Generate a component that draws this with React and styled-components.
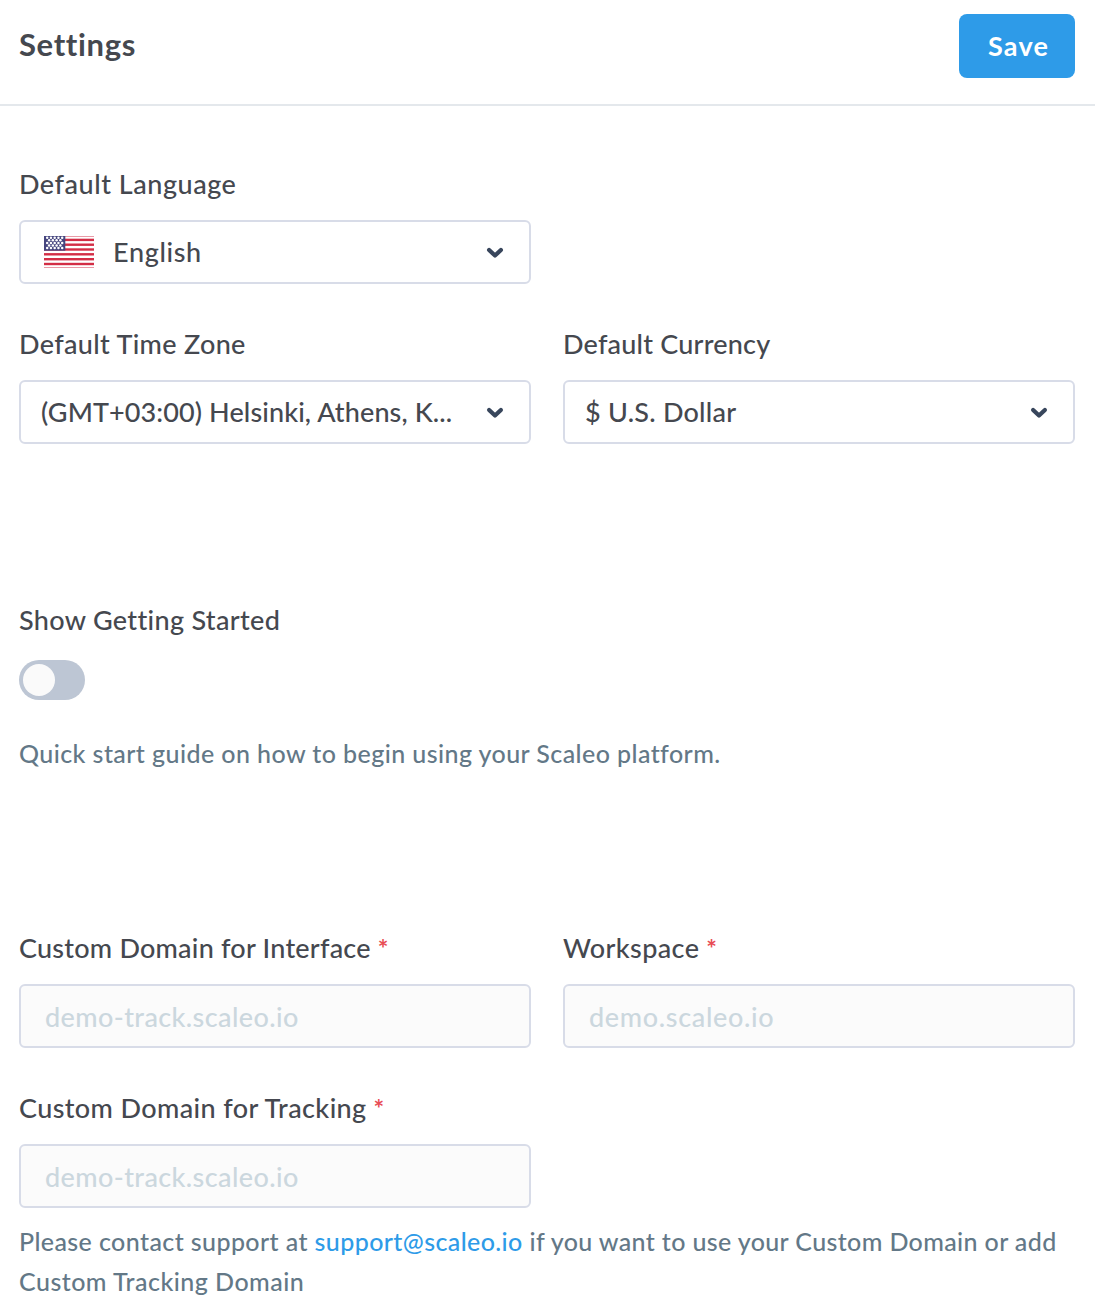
import React, { useState } from "react";
import styled, { createGlobalStyle } from "styled-components";

const GlobalStyle = createGlobalStyle`
  *, *::before, *::after { box-sizing: border-box; }
  body {
    margin: 0;
    background: #fff;
    color: #45484f;
    font-family: Lato, "Liberation Sans", sans-serif;
    font-weight: 500;
    font-variant-ligatures: none;
  }
`;

const Page = styled.main`
  width: 1095px;
  min-height: 1311px;
`;

const Header = styled.header`
  display: flex;
  align-items: flex-start;
  justify-content: space-between;
  height: 106px;
  padding: 14px 20px 0 19px;
  border-bottom: 2px solid #e4e8ec;
`;

const Title = styled.h1`
  margin: 0;
  font-size: 31px;
  line-height: 60px;
  font-weight: 700;
  letter-spacing: 0.65px;
`;

const SaveButton = styled.button`
  width: 116px;
  height: 64px;
  padding: 0 0 1px 3px;
  border: 0;
  border-radius: 8px;
  background: #2e9be8;
  color: #fff;
  font: 700 27px Lato, sans-serif;
  letter-spacing: 1.2px;
`;

const Section = styled.section`
  display: grid;
  grid-template-columns: 512px 512px;
  gap: 44px 32px;
  padding: ${(p) => p.$top}px 20px 0 19px;
`;

const Field = styled.div`
  grid-column: ${(p) => (p.$wide ? "1 / -1" : "auto")};
`;

const Label = styled.label`
  display: flex;
  height: 36px;
  margin-bottom: ${(p) => p.$gap || 16}px;
  font-size: 27px;
  line-height: 32px;
  white-space: nowrap;
`;

const Tracked = styled.span`
  letter-spacing: ${(p) => p.$ls || 0}px;
  white-space: pre;
`;

const Required = styled.span`
  margin-left: 7px;
  color: #e84c55;
  font: 700 25px/32px Lato, sans-serif;
`;

const SelectBox = styled.div`
  display: flex;
  align-items: center;
  width: 512px;
  height: 64px;
  padding: 0 25px 0 ${(p) => (p.$flag ? 23 : 20)}px;
  border: 2px solid #d8dce8;
  border-radius: 6px;
  font-size: 27px;
  line-height: 36px;
`;

const SelectFlag = styled.svg`
  width: 50px;
  height: 32px;
  margin-right: 19px;
`;

const Arrow = styled.svg`
  width: 18px;
  height: 12px;
  margin: 2px 0 0 auto;
`;

const Input = styled.input`
  display: block;
  width: 512px;
  height: 64px;
  padding: 0 24px;
  border: 2px solid #d8dce8;
  border-radius: 6px;
  background: #fbfbfb;
  font: 500 27px Lato, sans-serif;
  letter-spacing: ${(p) => p.$ls || 0}px;
  &::placeholder { color: #cbd7de; opacity: 1; }
`;

const Toggle = styled.button`
  display: flex;
  width: 66px;
  height: 40px;
  padding: 4px;
  border: 0;
  border-radius: 20px;
  background: #bdc6d4;
  justify-content: ${(p) => (p.$on ? "flex-end" : "flex-start")};
`;

const Knob = styled.span`
  width: 32px;
  height: 32px;
  border-radius: 50%;
  background: #fafafa;
`;

const Help = styled.p`
  margin: ${(p) => p.$top}px 0 0;
  color: #637887;
  font-size: 25px;
  line-height: 40px;
`;

const Link = styled.a`
  color: #2e9be8;
  letter-spacing: 0.4px;
  text-decoration: none;
`;

function Flag() {
  const stripes = [3.9, 8.7, 13.5, 18.3, 23.2, 28];
  const stars = [];
  for (let row = 0; row < 5; row++) {
    for (let col = 0; col < (row % 2 ? 4 : 5); col++) {
      stars.push([3.2 + col * 3.75 + (row % 2 ? 1.9 : 0), 1.7 + row * 2.6]);
    }
  }
  return (
    <SelectFlag viewBox="0 0 50 32">
      <rect width="50" height="32" fill="#fff" />
      <rect width="50" height="1" fill="#e99ba7" />
      {stripes.map((y) => (
        <rect key={y} y={y - 1.2} width="50" height="2.4" fill="#d32d45" />
      ))}
      <rect y="31" width="50" height="1" fill="#e99ba7" />
      <rect width="21.3" height="14.7" fill="#46467f" />
      {stars.map(([x, y]) => (
        <circle key={`${x}-${y}`} cx={x} cy={y} r="1.25" fill="#fff" />
      ))}
    </SelectFlag>
  );
}

function Select({ text, ls, flag }) {
  return (
    <SelectBox $flag={flag}>
      {flag && <Flag />}
      <Tracked $ls={ls}>{text}</Tracked>
      <Arrow viewBox="0 0 18 12">
        <path d="M3.1 3 9 8.6l5.9-5.6" fill="none" stroke="#38465c" strokeWidth="4.2" strokeLinecap="round" strokeLinejoin="round" />
      </Arrow>
    </SelectBox>
  );
}

function FieldLabel({ text, ls, required, gap }) {
  return (
    <Label $gap={gap}>
      <Tracked $ls={ls}>{text}</Tracked>
      {required && <Required>*</Required>}
    </Label>
  );
}

export default function App() {
  const [guide, setGuide] = useState(false);
  return (
    <>
      <GlobalStyle />
      <Page>
        <Header>
          <Title>Settings</Title>
          <SaveButton>Save</SaveButton>
        </Header>

        <Section $top={62}>
          <Field $wide>
            <FieldLabel text="Default Language" ls={0.53} />
            <Select flag text="English" ls={0.65} />
          </Field>
          <Field>
            <FieldLabel text="Default Time Zone" ls={0.33} />
            <Select text="(GMT+03:00) Helsinki, Athens, K..." ls={0.11} />
          </Field>
          <Field>
            <FieldLabel text="Default Currency" ls={0.21} />
            <Select text="$ U.S. Dollar" ls={0.25} />
          </Field>
        </Section>

        <Section $top={160}>
          <Field $wide>
            <FieldLabel text="Show Getting Started" ls={0.33} gap={20} />
            <Toggle $on={guide} onClick={() => setGuide(!guide)} aria-label="Show Getting Started">
              <Knob />
            </Toggle>
            <Help $top={33}>
              <Tracked $ls={0.42}>Quick start guide on how to begin using your Scaleo platform.</Tracked>
            </Help>
          </Field>
        </Section>

        <Section $top={159}>
          <Field>
            <FieldLabel text="Custom Domain for Interface" ls={0.23} required />
            <Input disabled placeholder="demo-track.scaleo.io" $ls={0.39} />
          </Field>
          <Field>
            <FieldLabel text="Workspace" ls={0.36} required />
            <Input disabled placeholder="demo.scaleo.io" $ls={0.66} />
          </Field>
          <Field $wide>
            <FieldLabel text="Custom Domain for Tracking" ls={0.39} required />
            <Input disabled placeholder="demo-track.scaleo.io" $ls={0.39} />
            <Help $top={13}>
              <Tracked $ls={0.4}>Please contact support at </Tracked>
              <Link href="mailto:support@scaleo.io">support@scaleo.io</Link>
              <Tracked $ls={0.37}> if you want to use your Custom Domain or add</Tracked>
              <br />
              <Tracked $ls={0.47}>Custom Tracking Domain</Tracked>
            </Help>
          </Field>
        </Section>
      </Page>
    </>
  );
}
